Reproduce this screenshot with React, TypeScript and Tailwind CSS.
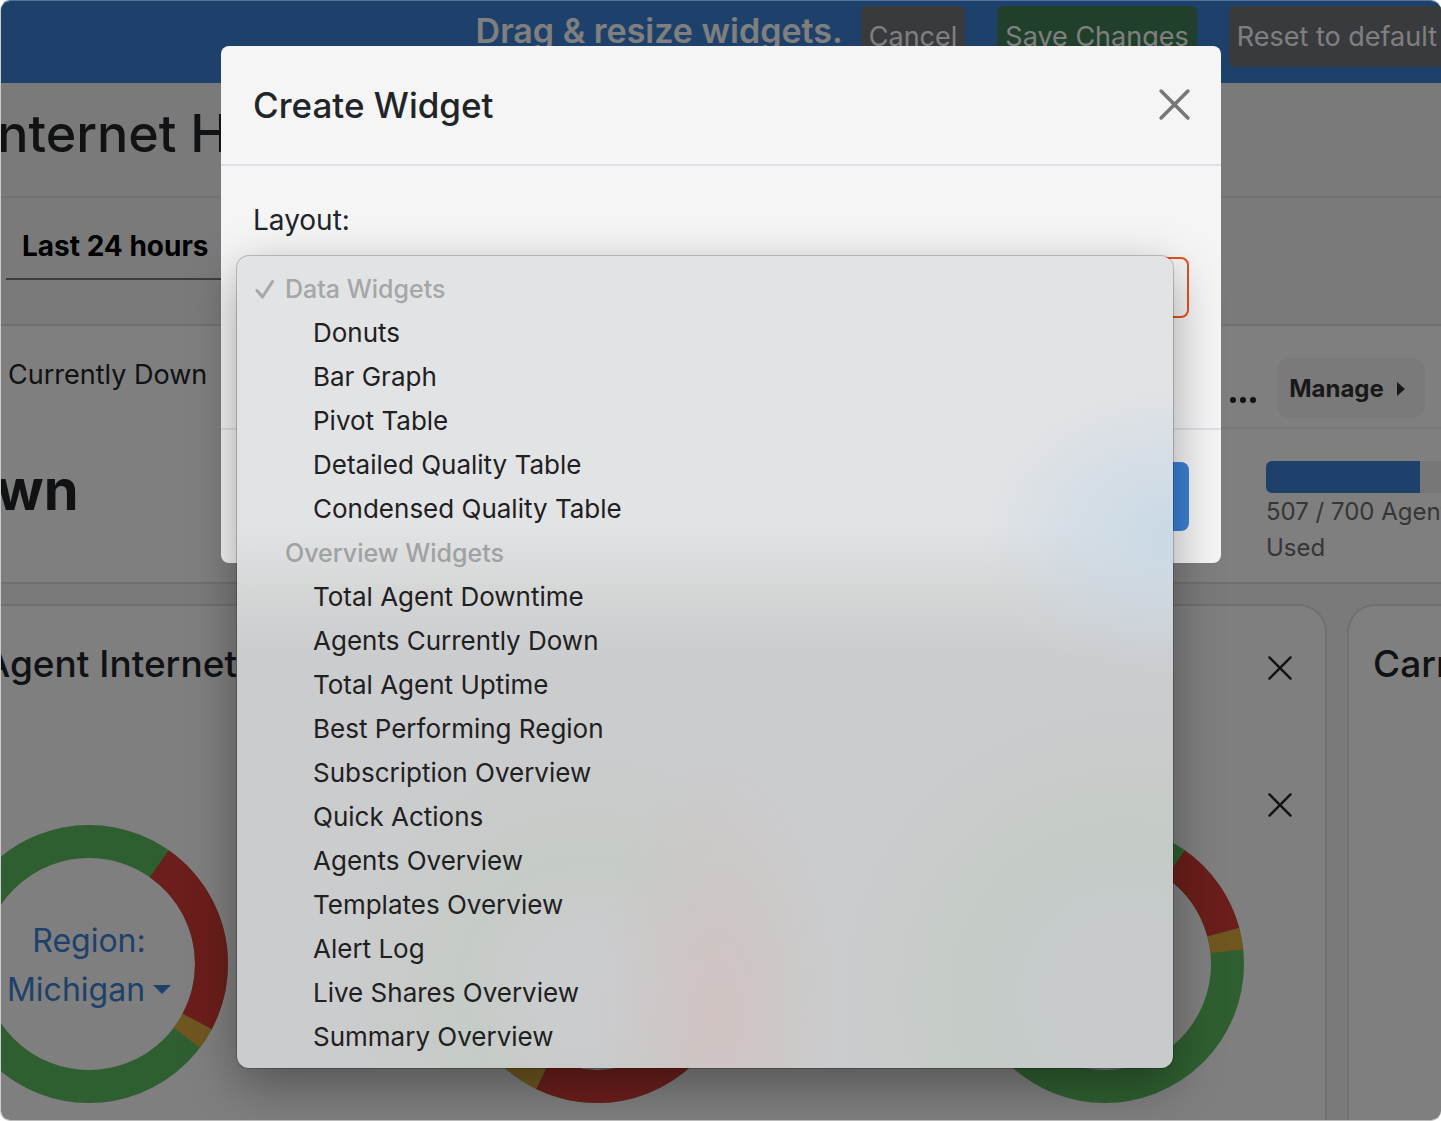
const dataWidgets = ["Donuts", "Bar Graph", "Pivot Table", "Detailed Quality Table", "Condensed Quality Table"];

const overviewWidgets = [
  "Total Agent Downtime",
  "Agents Currently Down",
  "Total Agent Uptime",
  "Best Performing Region",
  "Subscription Overview",
  "Quick Actions",
  "Agents Overview",
  "Templates Overview",
  "Alert Log",
  "Live Shares Overview",
  "Summary Overview",
];

// angles in degrees, clockwise from the top
const donuts = [
  { id: 1, region: "Michigan", redFrom: 35, redTo: 118, amberTo: 127 },
  { id: 2, redFrom: 35, redTo: 206, amberTo: 226 },
  { id: 3, redFrom: 35, redTo: 75, amberTo: 84 },
];

function CrossIcon({ className, strokeWidth }: { className: string; strokeWidth: number }) {
  return (
    <svg viewBox="0 0 32 32" className={className} fill="none" stroke="currentColor" strokeWidth={strokeWidth} strokeLinecap="round" aria-hidden="true">
      <path d="M3 3 29 29M29 3 3 29" />
    </svg>
  );
}

function Arc({ from, to, color }: { from: number; to: number; color: string }) {
  return (
    <circle
      cx="139"
      cy="139"
      r="122.5"
      pathLength={360}
      fill="none"
      stroke={color}
      strokeWidth="33"
      strokeDasharray={`${to - from} ${360 - (to - from)}`}
      strokeDashoffset={-from}
    />
  );
}

function Donut({ region, redFrom, redTo, amberTo }: { region?: string; redFrom: number; redTo: number; amberTo: number }) {
  return (
    <div className="grid h-[278px] w-[278px] shrink-0 place-items-center">
      <svg viewBox="0 0 278 278" className="col-start-1 row-start-1 h-full w-full -rotate-90" aria-hidden="true">
        <circle cx="139" cy="139" r="122.5" fill="none" stroke="#5ebe60" strokeWidth="33" />
        <Arc from={redFrom} to={redTo} color="#d63c36" />
        <Arc from={redTo} to={amberTo} color="#e0ae42" />
      </svg>
      {region && (
        <button className="col-start-1 row-start-1 pt-[2px] text-center text-[32px] leading-[49px] text-[#3d82d6]">
          Region:
          <span className="flex items-center justify-center gap-2">
            {region}
            <svg viewBox="0 0 18 9" className="h-[9px] w-[18px]" fill="currentColor" aria-hidden="true">
              <path d="M0 0h18L9 9z" />
            </svg>
          </span>
        </button>
      )}
    </div>
  );
}

function Dashboard() {
  return (
    <div className="flex h-full flex-col bg-[#f5f5f5] whitespace-nowrap text-[#212529]">
      <header className="flex h-[82px] shrink-0 items-start justify-end gap-8 bg-[#3c82d6] pt-[5px] text-white">
        <div className="flex items-start gap-[18px]">
          <h2 className="pt-[3px] text-[34px] leading-[44px] font-semibold">Drag &amp; resize widgets.</h2>
          <button className="h-[61px] rounded-md bg-[#70757d] px-2 pt-px text-[27px]">Cancel</button>
        </div>
        <button className="h-[61px] rounded-md bg-[#408056] px-2 pt-px text-[27px]">Save Changes</button>
        <button className="-mr-1 h-[61px] rounded-md bg-[#70757d] px-2 pt-px text-[27px]">Reset to default</button>
      </header>

      <div className="flex h-[115px] shrink-0 items-center border-b-2 border-[#e4e4e4]">
        <h1 className="-ml-[18px] pb-3 text-[52px] leading-none font-medium">Internet Health</h1>
      </div>

      <nav className="h-[128px] shrink-0 border-b-2 border-[#e0e0e0] pl-[5px]">
        <button className="h-[82px] w-[300px] border-b-2 border-[#7a7a7a] px-4 pt-4 text-left text-[28px] font-bold text-black">
          Last 24 hours
        </button>
      </nav>

      <section className="flex h-[258px] shrink-0 justify-between border-b-2 border-[#e0e0e0] bg-white">
        <div className="pt-7 pl-[7px]">
          <p className="text-[27px] leading-[42px]">Currently Down</p>
          <p className="-ml-[86px] pt-14 text-[56px] leading-[76px] font-bold">Down</p>
        </div>
        <div className="w-[440px]">
          <div className="flex h-[103px] items-start justify-end gap-5 border-b-2 border-[#eeeeee] pt-8 pr-4">
            <button aria-label="More" className="flex h-[60px] items-center pt-6">
              <svg viewBox="0 0 28 6" className="h-[6px] w-[28px]" fill="currentColor" aria-hidden="true">
                <circle cx="4" cy="3" r="3" />
                <circle cx="14" cy="3" r="3" />
                <circle cx="24" cy="3" r="3" />
              </svg>
            </button>
            <button className="flex h-[60px] w-[148px] items-center justify-center gap-3 rounded-xl bg-[#f5f5f5] pt-[2px] pr-2 text-2xl font-bold text-[#333333]">
              Manage
              <svg viewBox="0 0 9 14" className="h-[14px] w-[9px]" fill="currentColor" aria-hidden="true">
                <path d="M1 0 9 7 1 14z" />
              </svg>
            </button>
          </div>
          <div className="-mr-8 ml-auto w-[207px] pt-8">
            <div className="h-8 overflow-hidden rounded-md bg-[#eeeeee]">
              <div className="h-full bg-[#3c82d6]" style={{ width: "154px" }} />
            </div>
            <p className="pt-px text-2xl leading-9 whitespace-normal text-[#6c6c6c]">507 / 700 Agents Used</p>
          </div>
        </div>
      </section>

      <div className="-mr-12 -ml-20 flex grow gap-5 pt-5">
        <section className="grow rounded-t-[28px] border-2 border-b-0 border-[#e0e0e0] bg-white px-[27px]">
          <div className="flex h-[116px] items-center justify-between pr-[5px] pl-[34px]">
            <h3 className="text-[37px] font-medium">Agent Internet</h3>
            <button aria-label="Remove widget" className="pt-2">
              <CrossIcon className="h-[26px] w-[26px]" strokeWidth={3} />
            </button>
          </div>
          <div className="flex h-[103px] items-end justify-end pr-[5px] pb-[7px]">
            <button aria-label="Remove chart">
              <CrossIcon className="h-[26px] w-[26px]" strokeWidth={3} />
            </button>
          </div>
          <div className="flex gap-[230px]">
            {donuts.map(({ id, ...donut }) => (
              <Donut key={id} {...donut} />
            ))}
          </div>
        </section>
        <section className="w-[142px] shrink-0 overflow-hidden rounded-t-[28px] border-2 border-b-0 border-[#e0e0e0] bg-white pl-6">
          <h3 className="flex h-[116px] items-center text-[37px] font-medium">Carrier</h3>
        </section>
      </div>
    </div>
  );
}

function LayoutMenu() {
  return (
    <div
      role="listbox"
      aria-label="Layout"
      className="absolute -top-px right-4 -left-4 rounded-xl bg-[#cbccce] bg-[radial-gradient(ellipse_200px_150px_at_100%_275px,#c9d9e6,transparent),radial-gradient(ellipse_120px_260px_at_480px_760px,#d1c3c3,transparent),radial-gradient(circle_250px_at_350px_730px,transparent_20%,#c5cbc6_50%,transparent),radial-gradient(circle_310px_at_890px_740px,#c8cbce_20%,#c4cbc6_50%,transparent),linear-gradient(#e2e3e5_270px,#d5d6d6_335px,#cbccce_400px)] pt-[11px] pb-[9px] text-[26px] leading-[44px] text-[#1f2021] shadow-[0_0_0_1px_rgba(0,0,0,0.2),0_16px_50px_rgba(0,0,0,0.35)]"
    >
      <div role="group" aria-label="Data Widgets">
        <div className="flex items-center gap-[10px] pl-[18px] text-[25px] font-medium text-[#a5a6a7]">
          <svg viewBox="0 0 20 20" className="h-5 w-5" fill="none" stroke="currentColor" strokeWidth="3" strokeLinecap="round" strokeLinejoin="round" aria-hidden="true">
            <path d="M2 11.5 7.5 18 17.5 2.5" />
          </svg>
          Data Widgets
        </div>
        {dataWidgets.map((name) => (
          <div key={name} role="option" aria-selected="false" className="pl-[76px]">
            {name}
          </div>
        ))}
      </div>
      <div role="group" aria-label="Overview Widgets">
        <div className="pl-12 text-[25px] font-medium text-[#a0a1a1]">Overview Widgets</div>
        {overviewWidgets.map((name) => (
          <div key={name} role="option" aria-selected="false" className="pl-[76px]">
            {name}
          </div>
        ))}
      </div>
    </div>
  );
}

function CreateWidgetModal() {
  return (
    <div role="dialog" aria-labelledby="modal-title" className="w-[1000px] rounded-lg bg-[#f5f5f5] text-[#212529]">
      <div className="flex h-[120px] items-center justify-between border-b-2 border-[#dee2e6] px-8">
        <h2 id="modal-title" className="text-[35px] font-medium">Create Widget</h2>
        <button aria-label="Close" className="pb-[2px] text-[#777777]">
          <CrossIcon className="-mr-[2px] h-[33px] w-[33px]" strokeWidth={3.5} />
        </button>
      </div>
      <div className="h-[264px] border-b-2 border-[#dee2e6] px-8 pt-8">
        <label htmlFor="layout" className="block pb-[15px] text-[28px] leading-[44px]">
          Layout:
        </label>
        <div className="relative">
          <select id="layout" className="h-[61px] w-full appearance-none rounded-lg border-2 border-[#e8501f] bg-[#f5f5f5] px-4" />
          <LayoutMenu />
        </div>
      </div>
      <div className="flex justify-end px-8 py-8">
        <button aria-label="Create" className="h-[69px] w-[140px] rounded-lg bg-[#3c82d6]" />
      </div>
    </div>
  );
}

export default function App() {
  return (
    <div className="h-screen bg-white font-[Inter,sans-serif]">
      <div className="relative h-full overflow-hidden rounded-[10px] border border-r-0 border-t-[#53739a] border-b-[#bbbbbb] border-l-[#cccccc]">
        <Dashboard />
        <div className="absolute inset-0 flex items-start justify-center bg-black/50 pt-[45px]">
          <CreateWidgetModal />
        </div>
      </div>
    </div>
  );
}
